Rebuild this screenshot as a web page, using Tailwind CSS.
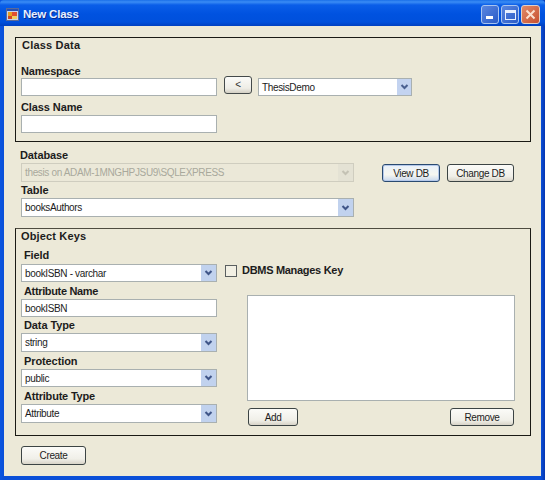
<!DOCTYPE html>
<html>
<head>
<meta charset="utf-8">
<script src="https://cdn.jsdelivr.net/npm/@tailwindcss/browser@4"></script>
</head>
<body class="m-0 bg-[#0a50d8]">
<div class="w-[545px] h-[480px] flex flex-col overflow-hidden font-['Liberation_Sans',Arial,sans-serif] text-[10px] tracking-[-0.35px] text-[#1c1c1c] bg-[linear-gradient(90deg,#0a55e0_0,#0a4fd8_4px,#0a4fd8_541px,#0636b0_545px)]">
  <!-- title bar -->
  <div class="h-[26px] shrink-0 flex items-center rounded-t-[4px] pt-[3px] pl-[6px] pr-[5px] bg-[linear-gradient(180deg,#1a6fe8_0,#3a8cf5_2px,#0a5ee8_5px,#0052e0_14px,#0050dc_22px,#0040c0_26px)]">
    <svg width="13" height="13" viewBox="0 0 13 13" class="shrink-0">
      <rect x="0.5" y="0.5" width="12" height="12" fill="#c8d4ee" stroke="#5a6a98"/>
      <rect x="1" y="1" width="11" height="2" fill="#2a50b0"/>
      <rect x="2" y="4" width="4" height="4" fill="#e8a020"/>
      <rect x="6" y="4" width="5" height="4" fill="#e05030"/>
      <rect x="2" y="8" width="4" height="3" fill="#d04828"/>
      <rect x="6" y="8" width="5" height="3" fill="#f0d060"/>
    </svg>
    <span class="ml-[4px] text-[11.5px] tracking-[-0.2px] font-bold text-[#e8f0ff] [text-shadow:1px_1px_0_#0a2a90]">New Class</span>
    <div class="ml-auto flex gap-[2px]">
      <div class="w-[18px] h-[19px] rounded-[3px] border border-[#a8c4f0] bg-[linear-gradient(135deg,#5a86e0,#2a5cc8)] flex items-end justify-start pl-[4px] pb-[4px]">
        <div class="w-[7px] h-[3px] bg-white"></div>
      </div>
      <div class="w-[18px] h-[19px] rounded-[3px] border border-[#a8c4f0] bg-[linear-gradient(135deg,#5a86e0,#2a5cc8)] flex items-center justify-center">
        <div class="w-[11px] h-[10px] border border-[#e8f0ff] border-t-[3px]"></div>
      </div>
      <div class="w-[19px] h-[19px] rounded-[3px] border border-[#e0d0c8] bg-[linear-gradient(135deg,#e08a68,#c85030)] flex items-center justify-center">
        <svg width="11" height="11" viewBox="0 0 11 11"><path d="M1.5 1.5 9.5 9.5M9.5 1.5 1.5 9.5" stroke="#fbe0d0" stroke-width="2" fill="none"/></svg>
      </div>
    </div>
  </div>

  <!-- client -->
  <div class="flex-1 mx-[4px] mb-[4px] pl-[11px] pt-[11px] bg-[#ece9d8]">
    <!-- Class Data -->
    <div class="w-[516px] h-[105px] border border-[#1a1a14] pl-[5px]">
      <div class="h-[16px] pl-[1px] leading-[15px] text-[11px] font-bold tracking-[0.2px]">Class Data</div>
      <div class="h-[14px] mt-[10px] leading-[14px] text-[11px] font-bold tracking-[-0.2px]">Namespace</div>
      <div class="flex items-start">
        <div class="w-[196px] h-[18px] bg-white border border-[#a9b0b0]"></div>
        <button class="w-[28px] h-[18px] -mt-[2px] ml-[7px] rounded-[3px] border border-[#444a4a] bg-[linear-gradient(180deg,#fbfbf8,#eeede6_70%,#d4d0c4)] leading-[14px] text-[#333]">&lt;</button>
        <div class="ml-[6px] w-[154px] h-[18px] bg-white border border-[#a9b0b0] flex items-center justify-between pl-[3px]">
          <span>ThesisDemo</span>
          <div class="w-[14px] h-[16px] bg-[#c3d3f0] flex items-center justify-center">
            <svg width="9" height="6" viewBox="0 0 9 6"><path d="M1.5 1 4.5 4 7.5 1" stroke="#4a6090" stroke-width="2" fill="none"/></svg>
          </div>
        </div>
      </div>
      <div class="h-[14px] mt-[4px] leading-[14px] text-[11px] font-bold tracking-[-0.1px]">Class Name</div>
      <div class="mt-[1px] w-[196px] h-[18px] bg-white border border-[#a9b0b0]"></div>
    </div>

    <!-- Database -->
    <div class="flex items-start">
      <div>
        <div class="h-[14px] mt-[6px] ml-[5px] leading-[14px] text-[11px] font-bold tracking-[-0.1px]">Database</div>
        <div class="mt-[1px] ml-[6px] w-[333px] h-[19px] border border-[#cfcdbf] flex items-center justify-between pl-[3px] text-[#a9a99c] bg-[#ebe8d8]">
          <span>thesis on ADAM-1MNGHPJSU9\SQLEXPRESS</span>
          <div class="w-[15px] h-[17px] bg-[#e4e2d4] flex items-center justify-center">
            <svg width="9" height="6" viewBox="0 0 9 6"><path d="M1.5 1 4.5 4 7.5 1" stroke="#c4c2b4" stroke-width="2" fill="none"/></svg>
          </div>
        </div>
        <div class="h-[14px] mt-[1px] ml-[6px] leading-[14px] text-[11px] font-bold tracking-[-0.1px]">Table</div>
        <div class="mt-[1px] ml-[6px] w-[333px] h-[19px] bg-white border border-[#a9b0b0] flex items-center justify-between pl-[3px]">
          <span>booksAuthors</span>
          <div class="w-[15px] h-[17px] bg-[#c1d2ee] flex items-center justify-center">
            <svg width="9" height="6" viewBox="0 0 9 6"><path d="M1.5 1 4.5 4 7.5 1" stroke="#3f5588" stroke-width="2" fill="none"/></svg>
          </div>
        </div>
      </div>
      <div class="ml-[28px] mt-[22px] flex gap-[7px]">
        <button class="w-[58px] h-[18px] rounded-[3px] border border-[#2a4a70] bg-[linear-gradient(180deg,#e8f0fa,#f6f6f0_60%,#c8d8ee)] shadow-[inset_0_0_0_1px_#b4c8ea] leading-[15px]">View DB</button>
        <button class="w-[67px] h-[18px] rounded-[3px] border border-[#3c4444] bg-[linear-gradient(180deg,#fbfbf8,#f0efe8_70%,#d8d4c8)] leading-[15px]">Change DB</button>
      </div>
    </div>

    <!-- Object Keys -->
    <div class="mt-[11px] w-[516px] h-[208px] border border-[#1a1a14] border-t-[#4e4c40] pl-[5px]">
      <div class="h-[15px] leading-[14px] text-[11px] font-bold tracking-[0.15px]">Object Keys</div>
      <div class="flex items-start mt-[4px]">
        <div class="w-[196px]">
          <div class="h-[14px] pl-[3px] leading-[14px] text-[11px] font-bold tracking-[-0.1px]">Field</div>
          <div class="mt-[2px] h-[18px] bg-white border border-[#a9b0b0] flex items-center justify-between pl-[3px]">
            <span>bookISBN - varchar</span>
            <div class="w-[15px] h-[16px] bg-[#c1d2ee] flex items-center justify-center">
              <svg width="9" height="6" viewBox="0 0 9 6"><path d="M1.5 1 4.5 4 7.5 1" stroke="#3f5588" stroke-width="2" fill="none"/></svg>
            </div>
          </div>
          <div class="h-[14px] mt-[2px] pl-[3px] leading-[14px] text-[11px] font-bold tracking-[-0.35px]">Attribute Name</div>
          <div class="mt-[1px] h-[18px] bg-white border border-[#a9b0b0] flex items-center pl-[3px]">bookISBN</div>
          <div class="h-[14px] mt-[1px] pl-[3px] leading-[14px] text-[11px] font-bold tracking-[-0.1px]">Data Type</div>
          <div class="mt-[1px] h-[19px] bg-white border border-[#a9b0b0] flex items-center justify-between pl-[3px]">
            <span>string</span>
            <div class="w-[15px] h-[17px] bg-[#c1d2ee] flex items-center justify-center">
              <svg width="9" height="6" viewBox="0 0 9 6"><path d="M1.5 1 4.5 4 7.5 1" stroke="#3f5588" stroke-width="2" fill="none"/></svg>
            </div>
          </div>
          <div class="h-[14px] mt-[2px] pl-[3px] leading-[14px] text-[11px] font-bold tracking-[-0.1px]">Protection</div>
          <div class="mt-[1px] h-[18px] bg-white border border-[#a9b0b0] flex items-center justify-between pl-[3px]">
            <span>public</span>
            <div class="w-[15px] h-[16px] bg-[#c1d2ee] flex items-center justify-center">
              <svg width="9" height="6" viewBox="0 0 9 6"><path d="M1.5 1 4.5 4 7.5 1" stroke="#3f5588" stroke-width="2" fill="none"/></svg>
            </div>
          </div>
          <div class="h-[14px] mt-[2px] pl-[3px] leading-[14px] text-[11px] font-bold tracking-[-0.2px]">Attribute Type</div>
          <div class="mt-[1px] h-[19px] bg-white border border-[#a9b0b0] flex items-center justify-between pl-[3px]">
            <span>Attribute</span>
            <div class="w-[15px] h-[17px] bg-[#c1d2ee] flex items-center justify-center">
              <svg width="9" height="6" viewBox="0 0 9 6"><path d="M1.5 1 4.5 4 7.5 1" stroke="#3f5588" stroke-width="2" fill="none"/></svg>
            </div>
          </div>
        </div>
        <div class="ml-[8px]">
          <div class="mt-[17px] h-[12px] flex items-center">
            <div class="w-[12px] h-[12px] border border-[#5a5f60] bg-[#f2f0e4]"></div>
            <span class="ml-[5px] mb-[2px] text-[11px] font-bold tracking-[-0.3px]">DBMS Manages Key</span>
          </div>
          <div class="mt-[18px] ml-[22px] w-[268px] h-[106px] bg-white border border-[#a9b0b0]"></div>
          <div class="mt-[7px] ml-[23px] w-[266px] flex justify-between">
            <button class="w-[50px] h-[18px] rounded-[3px] border border-[#3c4444] bg-[linear-gradient(180deg,#fbfbf8,#f0efe8_70%,#d8d4c8)] leading-[15px]">Add</button>
            <button class="w-[64px] h-[18px] rounded-[3px] border border-[#3c4444] bg-[linear-gradient(180deg,#fbfbf8,#f0efe8_70%,#d8d4c8)] leading-[15px]">Remove</button>
          </div>
        </div>
      </div>
    </div>

    <button class="mt-[10px] ml-[6px] block w-[65px] h-[19px] rounded-[3px] border border-[#3c4444] bg-[linear-gradient(180deg,#fbfbf8,#f0efe8_70%,#d8d4c8)] leading-[16px]">Create</button>
  </div>
</div>
</body>
</html>
